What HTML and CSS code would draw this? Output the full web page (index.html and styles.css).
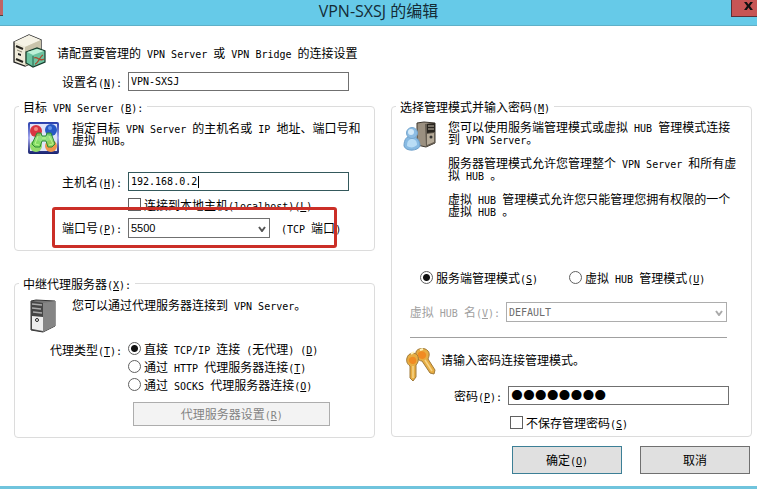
FILE: index.html
```html
<!DOCTYPE html>
<html lang="zh-CN">

<head>
    <meta charset="UTF-8">
    <meta name="viewport" content="width=device-width, initial-scale=1.0">
    <title>VPN-SXSJ 的编辑</title>
    <link rel="stylesheet" href="styles.css">
</head>

<body>
    <form class="window">
        <div class="titlebar">
            <span class="edge"></span>
            <h1>VPN-SXSJ 的编辑</h1>
            <button type="button" class="close" aria-label="关闭">
                <svg width="9" height="8" viewBox="0 0 10 9"><path d="M0 0h3l2 2.700 2-2.700h3L6.700 4.500 10 9H7L5 6.200 3 9H0l3.300-4.500z" fill="#111"/></svg>
            </button>
        </div>

        <div class="head">
            <svg class="icon" width="34" height="34" viewBox="0 0 34 34">
                <path d="M2 8L17 1l12 5v19L13 32 2 28z" fill="#d9d5c1" stroke="#222" stroke-width="1.300"/>
                <path d="M2 8L17 1l12 5-16 7z" fill="#f5f2e5"/>
                <path d="M13 13L29 6v20l-16 6z" fill="#c9c3ab"/>
                <path d="M3 9l10 4v18L3 27z" fill="#eeead9"/>
                <path d="M4 12l7 3M4 25l7 3" stroke="#26241e" stroke-width="2"/>
                <path d="M5 16l5 2" stroke="#8d8876"/>
                <path d="M6 19l3 1v2l-3-1z" fill="#222"/>
                <path d="M14 18l11-4 8 3v11l-12 5-7-4z" fill="#6cc3a0" stroke="#163b2b" stroke-width="1.200"/>
                <path d="M15 18l10-3 7 2-11 4z" fill="#bdf0d8"/>
                <path d="M21 22v10" stroke="#26634b"/>
                <path d="M22 24c4-2 5 4 10 1M23 30c3 0 5-8 8-9" fill="none" stroke="#a84a30" stroke-width="1.300"/>
            </svg>
            <p>请配置要管理的<span class="en"> VPN Server </span>或<span class="en"> VPN Bridge </span>的连接设置</p>
        </div>

        <div class="columns">
            <div class="row name-row">
                <label for="name">设置名<span class="en">(<u>N</u>):</span></label>
                <input type="text" id="name" value="VPN-SXSJ">
            </div>

            <div class="left">
                <fieldset class="target">
                    <legend>目标<span class="en"> VPN Server (<u>B</u>):</span></legend>
                    <div class="info">
                        <svg class="icon" width="31" height="32" viewBox="0 0 31 32">
                            <defs>
                                <linearGradient id="frame" x1="0" y1="0" x2="0" y2="1">
                                    <stop offset="0" stop-color="#263caa"/>
                                    <stop offset="0.500" stop-color="#a6a9ee"/>
                                    <stop offset="1" stop-color="#15206e"/>
                                </linearGradient>
                            </defs>
                            <rect width="31" height="32" rx="2" fill="url(#frame)"/>
                            <rect x="2" y="2" width="27" height="27" fill="#dfe3f8"/>
                            <circle cx="8" cy="9" r="6" fill="#d93643"/>
                            <circle cx="23" cy="8" r="6" fill="#2859c4"/>
                            <circle cx="8" cy="24" r="6" fill="#93dc6a"/>
                            <circle cx="23" cy="24" r="6" fill="#ef944b"/>
                            <path d="M9 11h4l1 3h4l1-3h4l4 11-3 3h-4l-2-6h-4l-2 6H7l-3-3z" fill="#7edc62" fill-opacity="0.800" stroke="#2c8a38"/>
                            <path d="M10 14L7 22l4 1M21 14l4 8-4 1M14 16h4" fill="none" stroke="#b9f78f"/>
                            <circle cx="8" cy="7" r="2" fill="#f38983"/>
                            <circle cx="22" cy="6" r="2" fill="#6595e9"/>
                        </svg>
                        <p>指定目标<span class="en"> VPN Server </span>的主机名或<span class="en"> IP </span>地址、端口号和<br>虚拟<span class="en"> HUB</span>。</p>
                    </div>
                    <div class="row">
                        <label for="host">主机名<span class="en">(<u>H</u>):</span></label>
                        <input type="text" id="host" class="focused" value="192.168.0.2">
                    </div>
                    <div class="row local-row">
                        <label class="option"><input type="checkbox"><span>连接到本地主机<span class="en">(localhost)(<u>L</u>)</span></span></label>
                    </div>
                    <div class="row port-row">
                        <label for="port">端口号<span class="en">(<u>P</u>):</span></label>
                        <span class="combo">
                            <select id="port"><option>5500</option></select>
                            <svg width="8" height="6" viewBox="0 0 8 6"><path d="M1 1l3 4 3-4" fill="none" stroke="#555" stroke-width="2"/></svg>
                        </span>
                        <span class="unit"><span class="en">(TCP </span>端口<span class="en">)</span></span>
                    </div>
                    <div class="mark"></div>
                </fieldset>

                <fieldset class="proxy">
                    <legend>中继代理服务器<span class="en">(<u>X</u>):</span></legend>
                    <div class="info">
                        <svg class="icon tower" width="26" height="34" viewBox="0 0 26 34">
                            <path d="M1 2l5-1 19 1v25l-12 6L1 31z" fill="#777" stroke="#333"/>
                            <path d="M13 4l12-2v25l-12 6z" fill="#858585"/>
                            <path d="M1 2l12 2v28L1 31z" fill="#454545"/>
                            <path d="M2 17l11 1v14L2 30z" fill="#eee"/>
                            <path d="M2 5l10 1M2 9l9 1M3 13l9 1" stroke="#aaa" stroke-width="1.500"/>
                            <circle cx="7" cy="21" r="1.500" fill="#fff" stroke="#222"/>
                        </svg>
                        <p>您可以通过代理服务器连接到<span class="en"> VPN Server</span>。</p>
                    </div>
                    <div class="row types" role="radiogroup" aria-labelledby="type">
                        <span id="type" class="caption">代理类型<span class="en">(<u>T</u>):</span></span>
                        <div class="stack">
                            <label class="option"><input type="radio" name="proxy" checked><span>直接<span class="en"> TCP/IP </span>连接<span class="en"> (</span>无代理<span class="en">) (<u>D</u>)</span></span></label>
                            <label class="option"><input type="radio" name="proxy"><span>通过<span class="en"> HTTP </span>代理服务器连接<span class="en">(<u>T</u>)</span></span></label>
                            <label class="option"><input type="radio" name="proxy"><span>通过<span class="en"> SOCKS </span>代理服务器连接<span class="en">(<u>O</u>)</span></span></label>
                        </div>
                    </div>
                    <button type="button" class="btn" disabled>代理服务器设置<span class="en">(<u>R</u>)</span></button>
                </fieldset>
            </div>

            <div class="right">
                <fieldset class="mode">
                    <legend>选择管理模式并输入密码<span class="en">(<u>M</u>)</span></legend>
                    <div class="info">
                        <svg class="icon" width="33" height="31" viewBox="0 0 33 31">
                            <path d="M14 2l7-1 11 1v20l-9 4-9-2z" fill="#9b9080" stroke="#3d372f"/>
                            <path d="M22 3l10-1v20l-9 4z" fill="#655d51"/>
                            <path d="M24 3l8-1v9l-8 1z" fill="#29251f"/>
                            <path d="M25 5h6M25 8h6" stroke="#c3b9a8"/>
                            <path d="M24 13l7-1v9l-7 3z" fill="#b5aa98"/>
                            <circle cx="28" cy="16" r="1.500" fill="#333"/>
                            <path d="M1 25c0-7 3-10 7-10s9 3 9 10c-2 5-14 6-16 0z" fill="#87bae3" stroke="#6d9fca"/>
                            <path d="M4 25c0-5 2-7 5-7s5 2 5 6c-3 3-7 3-10 1z" fill="#b9ddf6"/>
                            <circle cx="9" cy="12" r="5.500" fill="#8dbde4" stroke="#78a8cf"/>
                            <circle cx="8" cy="11" r="3" fill="#d4ebfa"/>
                        </svg>
                        <div>
                            <p>您可以使用服务端管理模式或虚拟<span class="en"> HUB </span>管理模式连接<br>到<span class="en"> VPN Server</span>。</p>
                            <p>服务器管理模式允许您管理整个<span class="en"> VPN Server </span>和所有虚<br>拟<span class="en"> HUB </span>。</p>
                            <p>虚拟<span class="en"> HUB </span>管理模式允许您只能管理您拥有权限的一个<br>虚拟<span class="en"> HUB </span>。</p>
                        </div>
                    </div>
                    <div class="modes">
                        <label class="option"><input type="radio" name="mode" checked><span>服务端管理模式<span class="en">(<u>S</u>)</span></span></label>
                        <label class="option"><input type="radio" name="mode"><span>虚拟<span class="en"> HUB </span>管理模式<span class="en">(<u>U</u>)</span></span></label>
                    </div>
                    <div class="row hub-row">
                        <label for="hub">虚拟<span class="en"> HUB </span>名<span class="en">(<u>V</u>):</span></label>
                        <span class="combo">
                            <select id="hub" disabled><option>DEFAULT</option></select>
                            <svg width="8" height="6" viewBox="0 0 8 6"><path d="M1 1l3 4 3-4" fill="none" stroke="#aaa" stroke-width="2"/></svg>
                        </span>
                    </div>
                    <hr>
                    <div class="keys">
                        <svg class="icon" width="32" height="34" viewBox="0 0 32 34">
                            <g stroke="#a07a3a" stroke-linejoin="round">
                                <path d="M11 4c1-4 9-5 12-1 2 2 1 6 0 8l7 11-1 4-4-1-8-12c-4 0-7-5-6-9z" fill="#e7ad42"/>
                                <path d="M2 10c1-5 8-7 11-2 1 4 0 7-2 9v12l-3 4-3-3V18c-3-2-4-5-3-8z" fill="#e7ad42"/>
                            </g>
                            <path d="M13 5c3-3 7-2 8 1s-2 5-4 5-5-3-4-6zM4 11c2-3 6-3 7 0s-1 5-3 5-5-2-4-5z" fill="#f18b22"/>
                            <path d="M20 12l7 11M8 18v12" stroke="#f6d487" stroke-width="1.500"/>
                            <path d="M6 6l3-2M15 2l3-1" stroke="#fff3bd" stroke-width="2"/>
                        </svg>
                        <p>请输入密码连接管理模式。</p>
                    </div>
                    <div class="row pass-row">
                        <label for="pass">密码<span class="en">(<u>P</u>):</span></label>
                        <input type="password" id="pass" value="12345678">
                    </div>
                    <label class="option nosave"><input type="checkbox"><span>不保存管理密码<span class="en">(<u>S</u>)</span></span></label>
                </fieldset>
                <div class="actions">
                    <button type="button" class="btn primary">确定<span class="en">(<u>O</u>)</span></button>
                    <button type="button" class="btn">取消</button>
                </div>
            </div>
        </div>
    </form>
</body>

</html>
```
FILE: styles.css
```css
* {
    box-sizing: border-box;
    margin: 0;
    padding: 0;
}

body {
    background: #fff;
    color: #000;
    font: 12px/12px "Noto Sans CJK SC", sans-serif;
}

.window {
    display: flex;
    flex-direction: column;
    min-height: 100vh;
    border-bottom: 3px solid #70c4dd;
}

/* 半角字符占 6px，不撑高行框 */
.en {
    font: 10px/0 "DejaVu Sans Mono", monospace;
    white-space: pre;
}

.icon {
    display: block;
}

/* 标题栏 */
.titlebar {
    display: grid;
    grid-template-columns: 26px 1fr 26px;
    height: 26px;
    background: #66cae8;
    border-bottom: 1px solid #5fb0c8;
}

.titlebar h1 {
    color: #142c36;
    font: 16px/22px "Open Sans", "Noto Sans CJK SC", sans-serif;
    text-align: center;
}

.edge {
    width: 3px;
    height: 16px;
    background: #c06464;
    border-bottom: 1px solid #444;
}

.close {
    display: flex;
    align-items: center;
    justify-content: center;
    padding: 0 0 4px 8px;
    height: 17px;
    background: #c75555;
    border: 1px solid #5c3038;
    border-width: 0 0 1px 1px;
}

.head {
    display: flex;
    gap: 11px;
    padding: 8px 12px 0;
}

.head p {
    padding-top: 13px;
}

.columns {
    display: grid;
    grid-template-columns: 1fr 1fr;
    column-gap: 16px;
    padding: 4px 5px 11px 14px;
}

.row {
    display: grid;
    grid-template-columns: 107px 1fr;
    column-gap: 6px;
    align-items: center;
    padding-right: 25px;
}

.row > label,
.caption {
    text-align: right;
}

.name-row {
    padding-left: 1px;
    padding-right: 26px;
    margin-bottom: 9px;
}

.left,
.right {
    grid-row: 2;
}

/* 分组框 */
fieldset {
    position: relative;
    min-width: 0;
    border: 1px solid #dcdcdc;
    border-radius: 4px;
}

legend {
    margin-left: 4px;
    padding: 0 4px;
    line-height: 13px;
}

.info {
    display: grid;
    grid-template-columns: 44px 1fr;
    padding: 9px 0 0 13px;
}

/* 输入控件 */
input[type="text"],
input[type="password"],
select {
    width: 100%;
    height: 19px;
    padding: 0 2px;
    background: #fff;
    border: 1px solid #707070;
    border-radius: 0;
    color: #000;
    font: 10px/17px "DejaVu Sans Mono", monospace;
    outline: none;
}

input.focused {
    border-color: #34595c;
    background: linear-gradient(#000, #000) 69px 3px / 1px 12px no-repeat #fff;
}

input[type="password"] {
    font: 34px/17px "Liberation Serif", serif;
    -webkit-text-stroke: 2px #000;
}

select {
    display: block;
    height: 20px;
    appearance: none;
}

.combo {
    position: relative;
}

.combo svg {
    position: absolute;
    right: 4px;
    top: 8px;
    pointer-events: none;
}

input[type="radio"],
input[type="checkbox"] {
    flex: none;
    width: 13px;
    height: 13px;
    appearance: none;
    background: #fff;
    border: 1px solid #606060;
}

input[type="radio"] {
    border-radius: 50%;
}

input[type="radio"]:checked {
    background: radial-gradient(circle, #111 3px, #fff 4px);
}

.option {
    display: flex;
    align-items: center;
}

input[type="radio"],
input[type="checkbox"] {
    margin-right: 3px;
}

.target {
    padding-bottom: 12px;
}

.target .info {
    min-height: 59px;
}

.local-row {
    margin-top: 7px;
}

.row > .option {
    grid-column: 2;
}

.port-row {
    grid-template-columns: 107px 142px 1fr;
    margin-top: 7px;
    padding-right: 0;
}

#port {
    font: 11px/18px "Liberation Sans", sans-serif;
}

.unit {
    padding-left: 5px;
    white-space: nowrap;
}

/* 红色标注框 */
.mark {
    position: absolute;
    left: 37px;
    right: 37px;
    bottom: 2px;
    height: 41px;
    border: 3px solid #cb2f27;
    border-radius: 3px;
}

.proxy {
    margin-top: 26px;
    padding-bottom: 11px;
}

.proxy .info {
    min-height: 52px;
}

.tower {
    margin-left: 2px;
}

.types {
    align-items: start;
}

.caption {
    padding-top: 2px;
}

.stack {
    display: grid;
    row-gap: 5px;
}

.btn {
    height: 28px;
    background: #e0e0e0;
    border: 1px solid #707070;
    color: #000;
    font: 12px/12px "Noto Sans CJK SC", sans-serif;
}

.proxy .btn {
    display: block;
    width: 55%;
    height: 24px;
    margin: 11px 0 0 118px;
    background: #f3f3f3;
    border-color: #adadad;
    color: #838383;
}

.mode .info {
    grid-template-columns: 45px 1fr;
    padding-top: 8px;
    padding-left: 11px;
    min-height: 158px;
}

.mode p + p {
    margin-top: 12px;
}

.modes {
    display: grid;
    grid-template-columns: 149px 1fr;
    padding-left: 28px;
}

.hub-row {
    grid-template-columns: 108px 1fr;
    margin-top: 18px;
    padding-right: 24px;
    color: #a0a0a0;
}

.hub-row select {
    border-color: #adadad;
    color: #6d6d6d;
    opacity: 1;
}

hr {
    margin: 15px 24px 0 18px;
    border: 0;
    border-top: 1px solid #a0a0a0;
}

.keys {
    display: flex;
    gap: 4px;
    padding: 10px 0 0 13px;
}

.keys p {
    padding-top: 6px;
}

.pass-row {
    grid-template-columns: 110px 1fr;
    margin-top: 4px;
    padding-right: 22px;
}

.nosave {
    margin: 11px 0 7px 118px;
}

.actions {
    display: flex;
    justify-content: flex-end;
    gap: 18px;
    padding: 9px 2px 0 0;
}

.actions .btn {
    width: 110px;
}

.actions .primary {
    border-color: #3c7f96;
}
```
